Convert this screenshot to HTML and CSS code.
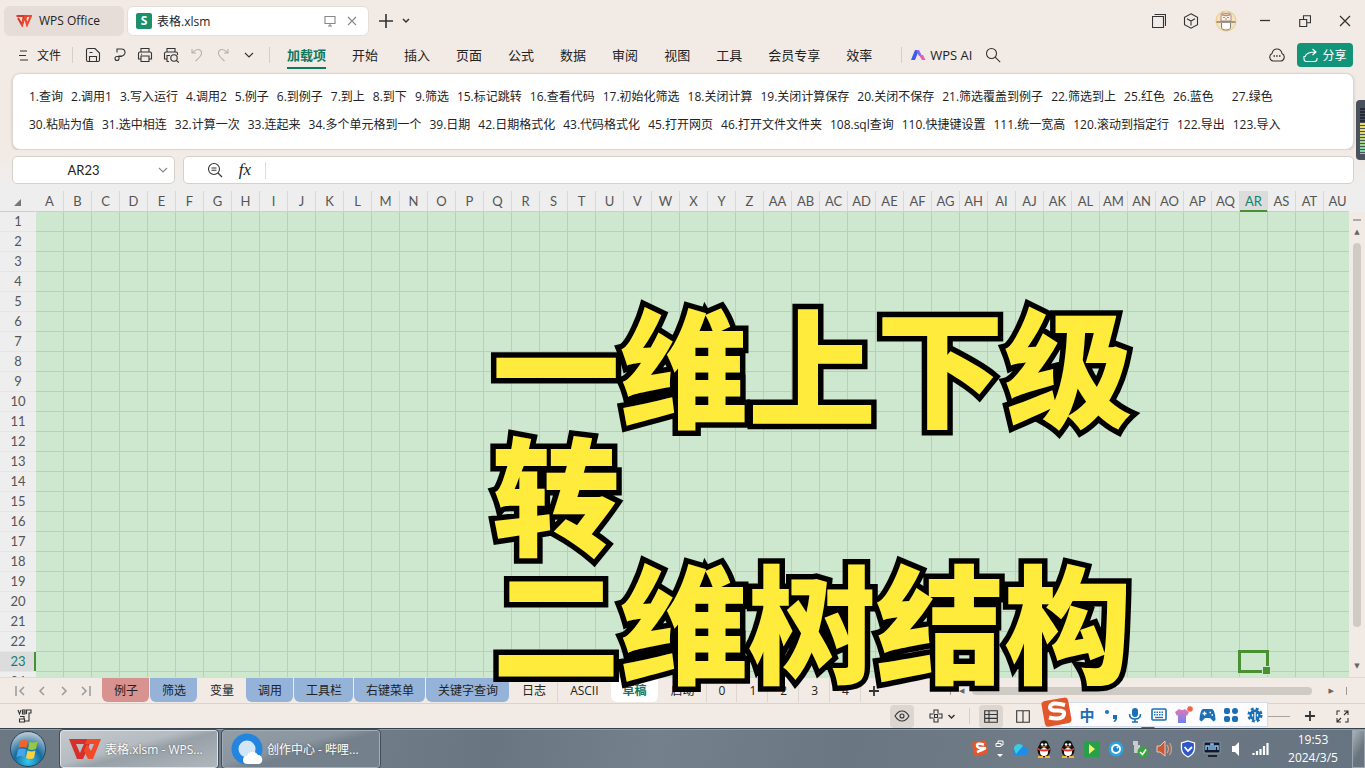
FILE: index.html
```html
<!DOCTYPE html>
<html lang="zh-CN">
<head>
    <meta charset="UTF-8">
    <meta name="viewport" content="width=device-width, initial-scale=1.0">
    <title>表格.xlsm - WPS Office</title>
    <link rel="stylesheet" href="styles.css">
</head>
<body>
    <header class="titlebar">
        <button class="tab tab-home">
            <svg width="16" height="12" viewBox="0 0 32 24"><path d="M1 2h20l-3 6-3-2-3 14L4 6" fill="none" stroke="#d6382f" stroke-width="4"/><path d="M12 20l6-16 4 16 8-18H20" fill="none" stroke="#ea4b30" stroke-width="4"/></svg>
            WPS Office
        </button>
        <div class="tab tab-doc">
            <span class="doc-icon">S</span>
            <span class="doc-name">表格.xlsm</span>
            <button aria-label="显示"><svg width="12" height="12" viewBox="0 0 12 12"><path d="M1 1.500h10v7H1zM4 11h4M6 8.500v2"/></svg></button>
            <button aria-label="关闭标签"><svg width="10" height="10" viewBox="0 0 10 10"><path d="M1 1l8 8M9 1L1 9"/></svg></button>
        </div>
        <button class="new-tab" aria-label="新建"><svg width="14" height="14" viewBox="0 0 14 14"><path d="M7 0v14M0 7h14" stroke-width="1.600"/></svg></button>
        <button class="tab-list" aria-label="标签列表"><svg width="8" height="6" viewBox="0 0 8 6"><path d="M1 1l3 3 3-3" stroke-width="1.500"/></svg></button>
        <div class="window-tools">
            <button aria-label="窗口"><svg width="14" height="14" viewBox="0 0 14 14"><path d="M.5 2.500h11v11H.5zM2.500 .5h11V12"/></svg></button>
            <button aria-label="应用"><svg width="16" height="16" viewBox="0 0 16 16"><path d="M8 .8l6.500 3.500v7.400L8 15.200l-6.500-3.500V4.300zM4 5.800l4 2.200 4-2.200M8 8v4.500"/></svg></button>
            <button class="avatar" aria-label="账号">
                <svg width="22" height="22" viewBox="0 0 22 22"><circle cx="11" cy="11" r="10" fill="#f6e3bd" stroke="#eccf93"/><path d="M6 11V6q0-3 1.500-3 3.500 1 7 0Q16 3 16 6v5z" fill="#fbeee4" stroke="#8a7a70" stroke-width=".8"/><path d="M7 3.500q4 2.500 8 0v2q-4 1.500-8 0z" fill="#b98d77" stroke="none"/><path d="M6.500 13v4q0 3 4.500 3t4.500-3v-4" fill="#fff" stroke="#77706e" stroke-width=".9"/><path d="M1.500 12h19" stroke="#77706b" stroke-width="1.300"/><path d="M8.500 7.500h1M12.500 7.500h1M10.500 9h1" stroke-width=".9"/></svg>
            </button>
            <button class="win" aria-label="最小化"><svg width="12" height="12" viewBox="0 0 12 12"><path d="M1 5.500h10" stroke-width="1.300"/></svg></button>
            <button class="win" aria-label="还原"><svg width="12" height="12" viewBox="0 0 12 12"><path d="M.7 4.500h7v7h-7zM4.500 4V.7h7v7H8"/></svg></button>
            <button class="win" aria-label="关闭"><svg width="12" height="12" viewBox="0 0 12 12"><path d="M1 1l10 10M11 1L1 11" stroke-width="1.300"/></svg></button>
        </div>
    </header>

    <nav class="menubar">
        <button class="file"><svg width="10" height="11" viewBox="0 0 10 11"><path d="M1 1h7M0 5.500h7M1 10h8"/></svg>文件</button>
        <span class="divider"></span>
        <div class="quick">
            <button aria-label="保存"><svg width="16" height="16" viewBox="0 0 16 16"><path d="M1.500 3q0-1.500 1.500-1.500h7l4.500 4.500v7q0 1.500-1.500 1.500H3q-1.500 0-1.500-1.500zM4.500 14.500v-5h7v5M4.500 5.500h3"/></svg></button>
            <button aria-label="导出"><svg width="16" height="16" viewBox="0 0 16 16"><path d="M6 5.500V2h4.500a3.500 3.500 0 010 7H8v2.500a2 2 0 11-2-2h5"/></svg></button>
            <button aria-label="打印"><svg width="16" height="16" viewBox="0 0 16 16"><path d="M4 5V1.500h8V5M4 12H1.500V6.500q0-1.500 1.500-1.500h10q1.500 0 1.500 1.500V12H12M4 9h8v5.500H4zM4 7.200h1"/></svg></button>
            <button aria-label="打印预览"><svg width="17" height="16" viewBox="0 0 17 16"><path d="M4 5V1.500h8V5M4 12H1.500V6.500q0-1.500 1.500-1.500h10q1.500 0 1.500 1.500V8M6 14.500H4V8.500h3"/><circle cx="11" cy="11" r="3.200"/><path d="M13.300 13.300l2.500 2.200"/></svg></button>
            <button class="dim" aria-label="撤销"><svg width="14" height="14" viewBox="0 0 14 14"><path d="M2 1v4h4M2.300 4.800Q5 1.500 8 1.500a3.500 3.500 0 013.500 4Q11 8.500 5.500 13"/></svg></button>
            <button class="dim" aria-label="恢复"><svg width="14" height="14" viewBox="0 0 14 14"><path d="M12 1v4H8M11.700 4.800Q9 1.500 6 1.500a3.500 3.500 0 00-3.500 4Q3 8.500 8.500 13"/></svg></button>
            <button aria-label="更多"><svg width="10" height="7" viewBox="0 0 10 7"><path d="M1 1l4 4 4-4"/></svg></button>
        </div>
        <span class="divider"></span>
        <div class="menus">
            <button class="active">加载项</button>
            <button>开始</button>
            <button>插入</button>
            <button>页面</button>
            <button>公式</button>
            <button>数据</button>
            <button>审阅</button>
            <button>视图</button>
            <button>工具</button>
            <button>会员专享</button>
            <button>效率</button>
        </div>
        <span class="divider"></span>
        <button class="ai"><svg width="15" height="12" viewBox="0 0 15 12"><path d="M4 1h4L4 11H0z" fill="#3e5ce8" stroke="none"/><path d="M5 1h3l3 6H8z" fill="#8a65f4" stroke="none"/><path d="M8 6h4l2.500 5H11z" fill="#f05ca5" stroke="none"/></svg>WPS AI</button>
        <button class="search" aria-label="搜索"><svg width="16" height="16" viewBox="0 0 16 16"><circle cx="6.500" cy="6.500" r="5"/><path d="M10.200 10.200l5 5"/></svg></button>
        <button class="cloud" aria-label="云同步"><svg width="18" height="14" viewBox="0 0 18 14"><path d="M5 13a4 4 0 01-1-7.500Q5 1 9 1t5 4.500A4 4 0 0113 13z"/><path d="M5.500 8h1.500M8.200 8h1.500M11 8h1.500" stroke-width="1.600"/></svg></button>
        <button class="share"><svg width="15" height="15" viewBox="0 0 15 15"><path d="M1 8v3q0 2.500 2.500 2.500h8Q14 13.500 14 11v-1M2 9q1-5 10.500-5M9.500 1l3.500 3-3.500 3"/></svg>分享</button>
    </nav>

    <section class="ribbon">
        <div class="macro-row">
            <button>1.查询</button><button>2.调用1</button><button>3.写入运行</button><button>4.调用2</button><button>5.例子</button><button>6.到例子</button><button>7.到上</button><button>8.到下</button><button>9.筛选</button><button>15.标记跳转</button><button>16.查看代码</button><button>17.初始化筛选</button><button>18.关闭计算</button><button>19.关闭计算保存</button><button>20.关闭不保存</button><button>21.筛选覆盖到例子</button><button>22.筛选到上</button><button>25.红色</button><button class="wide">26.蓝色</button><button>27.绿色</button>
        </div>
        <div class="macro-row">
            <button>30.粘贴为值</button><button>31.选中相连</button><button>32.计算一次</button><button>33.连起来</button><button>34.多个单元格到一个</button><button>39.日期</button><button>42.日期格式化</button><button>43.代码格式化</button><button>45.打开网页</button><button>46.打开文件文件夹</button><button>108.sql查询</button><button>110.快捷键设置</button><button>111.统一宽高</button><button>120.滚动到指定行</button><button>122.导出</button><button>123.导入</button>
        </div>
    </section>

    <section class="formula-bar">
        <div class="name-box">
            <input type="text" value="AR23" aria-label="名称框">
            <button aria-label="展开名称"><svg width="10" height="6" viewBox="0 0 10 6"><path d="M1 1l4 4 4-4"/></svg></button>
        </div>
        <div class="formula">
            <button aria-label="查找"><svg width="16" height="16" viewBox="0 0 16 16"><circle cx="7" cy="7" r="5.500"/><path d="M11 11l4 4M4.500 6h5M4.500 8.300h5"/></svg></button>
            <button class="fx" aria-label="插入函数">fx</button>
            <input type="text" aria-label="编辑栏">
        </div>
    </section>

    <main class="sheet">
        <div class="grid">
            <table>
                <thead><tr id="columns"><th class="corner"><svg width="7" height="7" viewBox="0 0 7 7"><path d="M7 0v7H0z"/></svg></th></tr></thead>
                <tbody id="rows"></tbody>
            </table>
        </div>
        <div class="vscroll">
            <span class="split"></span>
            <button aria-label="向上滚动">▲</button>
            <span class="thumb"></span>
            <button aria-label="向下滚动">▼</button>
        </div>
    </main>

    <section class="sheet-tabs">
        <div class="tab-nav">
            <button aria-label="第一个"><svg width="10" height="10" viewBox="0 0 10 10"><path d="M1 0v10M9 1L5 5l4 4"/></svg></button>
            <button aria-label="上一个"><svg width="10" height="10" viewBox="0 0 10 10"><path d="M7 1L3 5l4 4"/></svg></button>
            <button aria-label="下一个"><svg width="10" height="10" viewBox="0 0 10 10"><path d="M3 1l4 4-4 4"/></svg></button>
            <button aria-label="最后一个"><svg width="10" height="10" viewBox="0 0 10 10"><path d="M9 0v10M1 1l4 4-4 4"/></svg></button>
        </div>
        <div class="tab-strip">
            <button class="red">例子</button>
            <button class="blue">筛选</button>
            <button class="clear">变量</button>
            <button class="blue">调用</button>
            <button class="blue">工具栏</button>
            <button class="blue">右键菜单</button>
            <button class="blue">关键字查询</button>
            <button>日志</button>
            <button class="clear">ASCII</button>
            <button class="current">草稿</button>
            <button>启动</button>
            <button>0</button>
            <button>1</button>
            <button>2</button>
            <button>3</button>
            <button>4</button>
        </div>
        <button class="add" aria-label="新建工作表"><svg width="10" height="10" viewBox="0 0 10 10"><path d="M5 0v10M0 5h10" stroke-width="1.800"/></svg></button>
        <div class="hscroll">
            <span class="bar"></span>
            <button aria-label="向左滚动">◀</button>
            <span class="thumb"></span>
            <button aria-label="向右滚动">▶</button>
            <span class="bar"></span>
        </div>
    </section>

    <footer class="statusbar">
        <button class="macro" aria-label="宏"><svg width="15" height="14" viewBox="0 0 15 14"><path d="M1 1l1.500 4L4 1M5.500 1v4H8V1zM5.500 3H8M9.500 5V1H14v3h-2v8H8M3 7.500h4V10M2.500 10h5v3h-5z"/></svg></button>
        <button class="on" aria-label="护眼"><svg width="16" height="12" viewBox="0 0 16 12"><path d="M1 6q3-5 7-5t7 5q-3 5-7 5T1 6z"/><circle cx="8" cy="6" r="2"/></svg></button>
        <button class="cross" aria-label="十字光标">
            <svg width="14" height="14" viewBox="0 0 14 14"><path d="M5 4.500V1h4v3.500M5 9.500V13h4V9.500M4.500 5H1v4h3.500M9.500 5H13v4H9.500M5.500 5.500h3v3h-3z"/></svg>
            <svg width="7" height="5" viewBox="0 0 7 5"><path d="M.5 1l3 3 3-3" stroke-width="1.500"/></svg>
        </button>
        <span class="divider"></span>
        <button class="on" aria-label="普通视图"><svg width="14" height="13" viewBox="0 0 14 13"><path d="M.7.7h12.600v11.600H.7zM.7 4.500h12.600M.7 8.400h12.600M5 .7v11.600"/></svg></button>
        <button class="page" aria-label="分页预览"><svg width="14" height="13" viewBox="0 0 14 13"><path d="M.7.7h12.600v11.600H.7zM7 .7v11.600"/></svg></button>
        <input type="range" min="0" max="100" value="40" aria-label="缩放">
        <button class="zoom-in" aria-label="放大"><svg width="10" height="10" viewBox="0 0 10 10"><path d="M5 0v10M0 5h10" stroke-width="1.800"/></svg></button>
        <button class="full" aria-label="全屏"><svg width="13" height="13" viewBox="0 0 13 13"><path d="M8 1h4v4M12 1L8 5M1 5V1h3M1 8v4h4M1 12l4-4M12 8v4H9"/></svg></button>
    </footer>

    <footer class="taskbar">
        <button class="start" aria-label="开始">
            <svg width="38" height="38" viewBox="0 0 38 38">
                <defs><radialGradient id="orb" cx="50%" cy="85%" r="80%"><stop offset="0" stop-color="#35c9ef"/><stop offset=".5" stop-color="#176ba0"/><stop offset="1" stop-color="#b5c6d2"/></radialGradient></defs>
                <circle cx="19" cy="19" r="17.500" fill="url(#orb)" stroke="#24465f"/>
                <path d="M11 11q4-2 8 0l-1.500 7q-4-2-8 0z" fill="#f0642c"/><path d="M20.500 11.500q4 2 8 0L27 19q-4 2-8 0z" fill="#97c842"/>
                <path d="M9 19.500q4-2 8 0L15.500 27q-4-2-8 0z" fill="#47a5e8"/><path d="M18.500 20.500q4 2 8 0L25 28q-4 2-8 0z" fill="#fbd140"/>
            </svg>
        </button>
        <button class="task task-on"><svg width="32" height="22" viewBox="0 0 32 22"><path d="M0 1h18l-3 5H7l4 9 6-14h6l-9 20H8z" fill="#d92f2a"/><path d="M18 1h14l-8 20h-5l-4-8 3-7 4 7 3-7h-9z" fill="#f04a28"/></svg><span>表格.xlsm - WPS...</span></button>
        <button class="task"><svg width="32" height="32" viewBox="0 0 32 32"><circle cx="16" cy="16" r="12" fill="#d3e6f5" stroke="#2385e0" stroke-width="7"/><path d="M16 31a4 4 0 010-8 6 6 0 0111-1 4.600 4.600 0 011 9z" fill="#fff"/></svg><span>创作中心 - 哔哩...</span></button>
        <div class="tray">
            <svg width="18" height="18" viewBox="0 0 18 18"><rect x="2" y="1" width="14" height="14" rx="2" fill="#e4572c" transform="rotate(-8 9 9)"/><path d="M13 4.500q-7-2-7 1t6 2.500-6 4" fill="none" stroke="#fff" stroke-width="2.500"/></svg>
            <svg width="10" height="18" viewBox="0 0 10 18"><path d="M1 3.500h5v3H1zM3 3V1h5v4H6" fill="none" stroke="#fff"/><path d="M2 14h6l-3 3z" fill="#fff"/></svg>
            <svg width="18" height="18" viewBox="0 0 18 18"><path d="M4 15a4 4 0 010-7 5 5 0 019-1 4 4 0 011 8z" fill="#1c8ee6"/><path d="M3 9a5 5 0 019-3L5 14z" fill="#3ccbe4"/></svg>
            <svg width="18" height="18" viewBox="0 0 18 18"><ellipse cx="9" cy="10" rx="6.500" ry="7" fill="#111"/><ellipse cx="9" cy="5" rx="4.500" ry="4.500" fill="#111"/><ellipse cx="9" cy="12" rx="4" ry="4" fill="#fff"/><circle cx="7.200" cy="4.500" r="1.300" fill="#fff"/><circle cx="10.800" cy="4.500" r="1.300" fill="#fff"/><path d="M6 6.500h6L9 8z" fill="#f8b52d"/><path d="M3 8q6 3 12 0v2q-6 3-12 0z" fill="#e3342e"/><path d="M3 16h5v2H3zM10 16h5v2h-5z" fill="#f8b52d"/></svg>
            <svg width="18" height="18" viewBox="0 0 18 18"><ellipse cx="9" cy="10" rx="6.500" ry="7" fill="#111"/><ellipse cx="9" cy="5" rx="4.500" ry="4.500" fill="#111"/><ellipse cx="9" cy="12" rx="4" ry="4" fill="#fff"/><circle cx="7.200" cy="4.500" r="1.300" fill="#fff"/><circle cx="10.800" cy="4.500" r="1.300" fill="#fff"/><path d="M6 6.500h6L9 8z" fill="#f8b52d"/><path d="M3 8q6 3 12 0v2q-6 3-12 0z" fill="#e3342e"/><path d="M3 16h5v2H3zM10 16h5v2h-5z" fill="#f8b52d"/></svg>
            <svg width="18" height="18" viewBox="0 0 18 18"><rect x="1" y="1" width="16" height="16" rx="2" fill="#26a148"/><path d="M6 4l6 5-6 5z" fill="#f6f06a"/></svg>
            <svg width="18" height="18" viewBox="0 0 18 18"><circle cx="9" cy="9" r="7.500" fill="#29a5df"/><circle cx="9" cy="9" r="4" fill="#2084c8" stroke="#fff" stroke-width="2"/><circle cx="10.500" cy="7.500" r="1" fill="#fff"/></svg>
            <svg width="18" height="18" viewBox="0 0 18 18"><path d="M2 1h5v4h2v5L7 13H3V5H2z" fill="#c9ccce"/><circle cx="12" cy="12" r="5.500" fill="#36a53a"/><path d="M9 12l2.500 2.500L15 9.500" fill="none" stroke="#fff" stroke-width="1.600"/></svg>
            <svg width="18" height="18" viewBox="0 0 18 18"><path d="M2 6h3l5-5v15l-5-4H2z" fill="#c65a37" stroke="#f3c6b4"/><path d="M12 5q3 4 0 8M14.500 3q4 6 0 12" fill="none" stroke="#e3987e" stroke-width="1.300"/></svg>
            <svg width="18" height="18" viewBox="0 0 18 18"><path d="M9 1l6.500 2v6Q15 14 9 17 3 14 2.500 9V3z" fill="#3057c8" stroke="#fff" stroke-width="1.300"/><path d="M5.500 7l3.500 4 4-4" fill="none" stroke="#fff" stroke-width="1.800"/></svg>
            <svg width="18" height="18" viewBox="0 0 18 18"><path d="M1 2h16v11H1z" fill="#10182a" stroke="#8a99a8"/><path d="M3 10V6h3v4M8 10V4h2v6M12 10V6h3v4" fill="none" stroke="#8fc0ee" stroke-width="1.500"/><path d="M5 16h9" stroke="#222" stroke-width="2"/></svg>
            <svg width="18" height="18" viewBox="0 0 18 18"><path d="M5 6h3l4-4v14l-4-4H5z" fill="#fff"/></svg>
            <svg width="18" height="18" viewBox="0 0 18 18"><path d="M2.500 15v-2M6 15v-4M9.500 15V9M13 15V6M16.500 15V3" stroke="#fff" stroke-width="2.200"/></svg>
        </div>
        <div class="clock"><span>19:53</span><span>2024/3/5</span></div>
        <button class="desktop" aria-label="显示桌面"></button>
    </footer>

    <h1 class="caption">一维上下级<br>转<br>二维树结构</h1>
    <div class="meter"><span></span></div>

    <div class="ime">
        <svg class="sogou" width="32" height="30" viewBox="0 0 32 30"><rect x="2" y="2" width="27" height="26" rx="4" fill="#e2562b" transform="rotate(-10 16 15)"/><path d="M24 8q-14-4-15 2 0 4 8 3.500 7 0 6 4-2 6-15 3" fill="none" stroke="#fff" stroke-width="4"/></svg>
        <button>中</button>
        <button aria-label="标点"><svg width="14" height="14" viewBox="0 0 14 14"><circle cx="3" cy="4" r="2" fill="#1a6fb5"/><path d="M9 7h4v3q0 3-3 4l-.5-1q1.500-1 1.500-2H9z" fill="#1a6fb5"/></svg></button>
        <button aria-label="语音"><svg width="14" height="16" viewBox="0 0 14 16"><rect x="4" y="1" width="6" height="9" rx="3" fill="#1a6fb5"/><path d="M1.500 7q0 5 5.500 5t5.500-5M7 12v3M4 15h6" fill="none" stroke="#1a6fb5" stroke-width="1.500"/></svg></button>
        <button aria-label="键盘"><svg width="16" height="13" viewBox="0 0 16 13"><rect x="1" y="1" width="14" height="11" rx="1" fill="none" stroke="#1a6fb5" stroke-width="1.600"/><path d="M3 4.200h10M3 6.800h10" stroke="#1a6fb5" stroke-width="1.500" stroke-dasharray="1.500 1"/><path d="M4 9.500h8" stroke="#1a6fb5" stroke-width="1.300"/></svg></button>
        <button aria-label="皮肤"><svg width="19" height="18" viewBox="0 0 19 18"><defs><linearGradient id="shirt" x1="0" y1="0" x2="0" y2="1"><stop offset="0" stop-color="#e577b4"/><stop offset="1" stop-color="#6a83f4"/></linearGradient></defs><path d="M1 6l4-3q3 2 6 0l4 3-2 4-1-1v8H4V9l-1 1z" fill="url(#shirt)"/><circle cx="16" cy="3" r="2.800" fill="#ee6740"/></svg></button>
        <button aria-label="游戏"><svg width="17" height="14" viewBox="0 0 17 14"><path d="M4 1h9q3 1 3.500 11l-2 1.500L11 10H6l-3.500 3.500-2-1.500Q1 2 4 1z" fill="#1a6fb5"/><path d="M3.500 5.500h4M5.500 3.500v4M10.500 4.500h1.500M12.500 7H14" stroke="#fff" stroke-width="1.400"/></svg></button>
        <button aria-label="工具箱"><svg width="14" height="14" viewBox="0 0 14 14"><g fill="#1a6fb5"><rect width="6" height="6" rx="2"/><rect x="8" width="6" height="6" rx="3"/><rect y="8" width="6" height="6" rx="2"/><rect x="8" y="8" width="6" height="6" rx="2"/></g></svg></button>
        <button aria-label="设置"><svg width="16" height="16" viewBox="0 0 16 16"><circle cx="8" cy="8" r="5.500" fill="#1a6fb5"/><circle cx="8" cy="8" r="6.300" fill="none" stroke="#1a6fb5" stroke-width="2.500" stroke-dasharray="2.800 2.150"/><path d="M8 5v8M5.500 7v2.500M10.500 7v2.500" stroke="#fff" stroke-width="1.300"/></svg></button>
    </div>

    <script>
        const COLS = 47;
        const ROWS = 24;
        const selectedCol = 'AR';
        const selectedRow = 23;

        function colName(i) {
            const last = String.fromCharCode(65 + i % 26);
            return i < 26 ? last : colName(Math.floor(i / 26) - 1) + last;
        }

        const columns = document.getElementById('columns');
        for (let c = 0; c < COLS; c++) {
            const th = document.createElement('th');
            th.textContent = colName(c);
            if (colName(c) === selectedCol) th.className = 'selected';
            columns.appendChild(th);
        }

        const rows = document.getElementById('rows');
        for (let r = 1; r <= ROWS; r++) {
            const tr = document.createElement('tr');
            const th = document.createElement('th');
            th.textContent = r;
            if (r === selectedRow) th.className = 'selected';
            tr.appendChild(th);
            for (let c = 0; c < COLS; c++) {
                const td = document.createElement('td');
                if (r === selectedRow && colName(c) === selectedCol) td.className = 'cell-active';
                tr.appendChild(td);
            }
            rows.appendChild(tr);
        }
    </script>
</body>
</html>
```
FILE: styles.css
```css
* {
    box-sizing: border-box;
}

body {
    margin: 0;
    height: 100vh;
    display: flex;
    flex-direction: column;
    overflow: hidden;
    position: relative;
    background-color: #f2eae4;
    color: #222;
    font-family: "Open Sans", "Noto Sans CJK SC", sans-serif;
    font-size: 12px;
}

button, input {
    font: inherit;
    color: inherit;
    border: none;
    background: none;
    padding: 0;
    margin: 0;
    outline: none;
}

button {
    display: flex;
    align-items: center;
    justify-content: center;
    white-space: nowrap;
    flex: none;
}

svg {
    flex: none;
    display: block;
}

.titlebar svg, .menubar svg, .formula-bar svg, .sheet-tabs svg, .statusbar svg {
    fill: none;
    stroke: #333;
    stroke-width: 1.1;
}

.divider {
    width: 1px;
    height: 16px;
    background-color: #d6cec9;
}

/* title bar */
.titlebar {
    display: flex;
    align-items: center;
    height: 41px;
    flex: none;
    padding-left: 4px;
}

.tab {
    display: flex;
    align-items: center;
    height: 30px;
    border-radius: 6px;
}

.tab-home {
    width: 120px;
    justify-content: flex-start;
    gap: 7px;
    padding-left: 12px;
    background-color: #e6ddd8;
    margin-right: 3px;
}

.tab-doc {
    width: 242px;
    padding: 0 11px 0 8px;
    background-color: #fff;
    border: 1px solid #e5ddd8;
}

.tab-doc svg {
    stroke: #888;
}

.doc-icon {
    width: 16px;
    height: 16px;
    border-radius: 2px;
    background-color: #1b9069;
    color: #fff;
    font-weight: bold;
    line-height: 16px;
    text-align: center;
    margin-right: 5px;
}

.doc-name {
    flex: 1;
}

.tab-doc button + button {
    margin-left: 11px;
}

.new-tab {
    margin-left: 10px;
}

.tab-list {
    margin-left: 9px;
}

.window-tools {
    display: flex;
    margin-left: auto;
}

.window-tools button {
    width: 32px;
    height: 32px;
}

.window-tools .avatar {
    width: 38px;
}

.window-tools .win {
    width: 40px;
}

/* menus */
.menubar {
    display: flex;
    align-items: center;
    height: 32px;
    flex: none;
    padding: 0 12px 4px 19px;
}

.file {
    gap: 8px;
    margin-right: 11px;
}

.quick {
    display: flex;
    margin: 0 7px;
}

.quick button {
    width: 26px;
    height: 26px;
}

.quick .dim svg {
    stroke: #b5afab;
}

.menus {
    display: flex;
    gap: 26px;
    margin: 0 29px 0 17px;
    font-size: 13px;
}

.menus button {
    height: 28px;
    border-bottom: 2px solid transparent;
}

.menus .active {
    color: #0f7860;
    font-weight: bold;
    border-bottom-color: #0f7860;
}

.ai {
    gap: 4px;
    margin-left: 9px;
    font-size: 13px;
}

.search {
    margin-left: 13px;
}

.cloud {
    margin-left: auto;
    margin-right: 11px;
}

.share {
    width: 56px;
    height: 24px;
    gap: 4px;
    border-radius: 4px;
    background-color: #129479;
    color: #fff;
}

.share svg {
    stroke: #fff;
}

/* add-in ribbon */
.ribbon {
    flex: none;
    margin: 0 11px 0 12px;
    padding: 8px 16px 11px;
    background-color: #fff;
    border: 1px solid #ddd5d0;
    border-radius: 8px;
    box-shadow: 0 1px 3px rgba(0, 0, 0, 0.15);
}

.macro-row {
    display: flex;
    gap: 8px;
    height: 28px;
    overflow: hidden;
}

.macro-row .wide {
    margin-right: 10px;
}

/* formula bar */
.formula-bar {
    display: flex;
    gap: 8px;
    flex: none;
    height: 41px;
    padding: 6px 11px 7px 12px;
    background: linear-gradient(#f2eae4, #eee);
}

.name-box, .formula {
    display: flex;
    align-items: center;
    background-color: #fff;
    border: 1px solid #d5d0cc;
    border-radius: 5px;
}

.name-box {
    width: 163px;
    padding-right: 6px;
    font-family: Lato, sans-serif;
    font-size: 13px;
}

.name-box svg {
    stroke: #888;
}

.name-box input {
    flex: 1;
    min-width: 0;
    text-align: center;
    padding: 0 4px 0 0;
}

.formula {
    flex: 1;
    padding-left: 23px;
}

.fx {
    width: 20px;
    margin-left: 12px;
    font-family: "Liberation Serif", serif;
    font-style: italic;
    font-size: 17px;
}

.formula input {
    flex: 1;
    margin-left: 10px;
    border-left: 1px solid #ddd;
}

/* grid */
.sheet {
    display: flex;
    flex: 1;
    min-height: 0;
    border-bottom: 1px solid #e0d9d5;
}

.grid {
    flex: 1;
    min-width: 0;
    overflow: hidden;
    background-color: #cde8cf;
}

.grid table {
    width: 1352px;
    table-layout: fixed;
    border-collapse: separate;
    border-spacing: 0;
    font-family: Lato, sans-serif;
    font-size: 13px;
    color: #555;
}

.grid th {
    padding: 0;
    font-weight: normal;
    background-color: #eee;
    line-height: 19px;
}

.grid thead th {
    width: 28px;
    height: 21px;
    border-right: 1px solid #d8d8d8;
    border-bottom: 1px solid #c8d0c8;
}

.grid thead .corner {
    width: 36px;
    border-right-color: #eee;
}

.corner svg {
    margin: 2px auto 0;
    fill: #777;
}

.grid tbody th {
    height: 20px;
    border-bottom: 1px solid #e5e5e5;
}

.grid td {
    padding: 0;
    height: 20px;
    border-right: 1px solid #c2cabf;
    border-bottom: 1px solid #c2cabf;
}

.grid th.selected {
    background-color: #dcdcdc;
    color: #14806a;
}

.grid thead th.selected {
    border-bottom-color: #499032;
    box-shadow: inset 0 -1px 0 #499032;
}

.grid tbody th.selected {
    box-shadow: inset -2px 0 0 #499032;
}

.grid td.cell-active {
    position: relative;
}

.cell-active::before {
    content: "";
    position: absolute;
    inset: -2px;
    border: 3px solid #499032;
}

.cell-active::after {
    content: "";
    position: absolute;
    right: -4px;
    bottom: -4px;
    width: 7px;
    height: 7px;
    background-color: #499032;
    border: 1px solid #cde8cf;
}

.vscroll {
    width: 16px;
    display: flex;
    flex-direction: column;
    align-items: center;
    padding: 28px 0 6px;
    background: linear-gradient(#eee 21px, #f2eae4 21px);
}

.vscroll button, .hscroll button {
    font-family: "DejaVu Sans", sans-serif;
    font-size: 7px;
    line-height: 10px;
    color: #666;
}

.split {
    width: 8px;
    height: 2px;
    background-color: #b0aaa6;
    margin-bottom: 6px;
}

.vscroll .thumb {
    width: 8px;
    flex: 1;
    margin: 6px 0 34px;
    border-radius: 4px;
    background-color: #d0cac5;
}

/* sheet tabs */
.sheet-tabs {
    display: flex;
    align-items: center;
    flex: none;
    height: 26px;
    border-bottom: 1px solid #d9d2cd;
}

.tab-nav {
    display: flex;
    gap: 12px;
    padding: 0 11px 0 15px;
}

.tab-nav svg {
    stroke: #999;
    stroke-width: 1.5;
}

.tab-strip {
    display: flex;
    align-self: flex-start;
}

.tab-strip button {
    height: 24px;
    padding: 0 11px 0 12px;
    border-right: 1px solid #ddd5d0;
    color: #222;
}

.tab-strip .red, .tab-strip .blue, .tab-strip .clear, .tab-strip .current {
    border-right-color: #f2eae4;
    border-radius: 0 0 6px 6px;
}

.tab-strip .red {
    background-color: #d89290;
}

.tab-strip .blue {
    background-color: #95b3d9;
}

.tab-strip .current {
    background-color: #fff;
    color: #0f7860;
    font-weight: bold;
}

.add {
    margin-left: 8px;
}

.hscroll {
    display: flex;
    align-items: center;
    flex: 1;
    gap: 8px;
    margin-left: 71px;
    padding-right: 18px;
}

.hscroll .bar {
    width: 1px;
    height: 8px;
    background-color: #999;
}

.hscroll .thumb {
    flex: 1;
    height: 8px;
    border-radius: 4px;
    background-color: #d0cac5;
}

.hscroll button:last-of-type {
    margin: 0 4px 0 9px;
}

/* status bar */
.statusbar {
    display: flex;
    align-items: center;
    flex: none;
    height: 24px;
    padding: 0 16px 0 17px;
}

.macro {
    margin-right: auto;
}

.on {
    width: 24px;
    height: 23px;
    border-radius: 4px;
    background-color: #dcd5d0;
}

.cross {
    gap: 5px;
    margin: 0 14px 0 15px;
}

.statusbar .divider {
    margin-right: 9px;
}

.page {
    margin: 0 20px 0 13px;
}

.statusbar input {
    width: 240px;
    height: 16px;
    appearance: none;
}

.statusbar input::-webkit-slider-runnable-track {
    height: 1px;
    background-color: #aaa29d;
}

.zoom-in {
    margin: 0 21px 0 15px;
}

/* windows taskbar */
.taskbar {
    display: flex;
    align-items: center;
    flex: none;
    height: 40px;
    border-top: 1px solid #34414e;
    background: linear-gradient(100deg, #6b7783 0%, #75818c 20%, #697581 36%, #74808b 48%, #6a7682 62%, #6f7b87 75%, #667380 100%);
    box-shadow: inset 0 1px 0 #8e99a3;
    color: #fff;
}

.start {
    width: 56px;
    margin-right: 4px;
}

.task {
    width: 158px;
    height: 38px;
    justify-content: flex-start;
    gap: 4px;
    padding-left: 8px;
    margin-right: 4px;
    border: 1px solid #a4adb5;
    border-radius: 3px;
    outline: 1px solid #424e59;
    background: linear-gradient(165deg, #929da6 0%, #8a959f 42%, #74808b 55%, #74808b 100%);
}

.task-on {
    border-color: #dfe3e6;
    background: linear-gradient(165deg, #c3c9cd 0%, #b5bcc1 42%, #98a1a8 55%, #b0b7bc 100%);
}

.task span {
    text-shadow: 0 0 2px #555;
}

.tray {
    display: flex;
    align-items: center;
    gap: 6px;
    margin-left: auto;
}

.clock {
    width: 78px;
    display: flex;
    flex-direction: column;
    align-items: center;
    line-height: 18px;
    margin-left: 5px;
}

.desktop {
    width: 13px;
    height: 38px;
    border: 1px solid #9ba5ae;
    background: linear-gradient(120deg, #aab3ba, #67737e 60%);
}

/* video caption over the sheet */
.caption {
    position: absolute;
    top: 299px;
    left: 492px;
    margin: 0;
    font-family: "Noto Sans CJK SC", sans-serif;
    font-size: 128px;
    font-weight: 900;
    line-height: 128px;
    color: #ffeb3b;
    -webkit-text-stroke: 11px #000;
    paint-order: stroke fill;
    white-space: nowrap;
}

.meter {
    position: absolute;
    top: 100px;
    right: 0;
    width: 9px;
    height: 60px;
    padding: 8px 0 6px 4px;
    border-radius: 4px 0 0 4px;
    background-color: #4a505c;
}

.meter span {
    display: block;
    height: 100%;
    background: repeating-linear-gradient(transparent 0 2px, #4a505c 2px 3px), linear-gradient(#252b36 30%, #e6d968 30% 50%, #6fd6b0);
}

/* floating input method bar */
.ime {
    position: absolute;
    right: 97px;
    bottom: 41px;
    display: flex;
    align-items: center;
    height: 25px;
    background: linear-gradient(90deg, transparent 20px, #fdfdff 20px);
    border: 1px solid #d3dce8;
    border-left: none;
}

.ime button {
    width: 24px;
    height: 24px;
    color: #1a6fb5;
    font-size: 15px;
    font-weight: bold;
}

.sogou {
    margin: -6px 2px 0 0;
}
```
